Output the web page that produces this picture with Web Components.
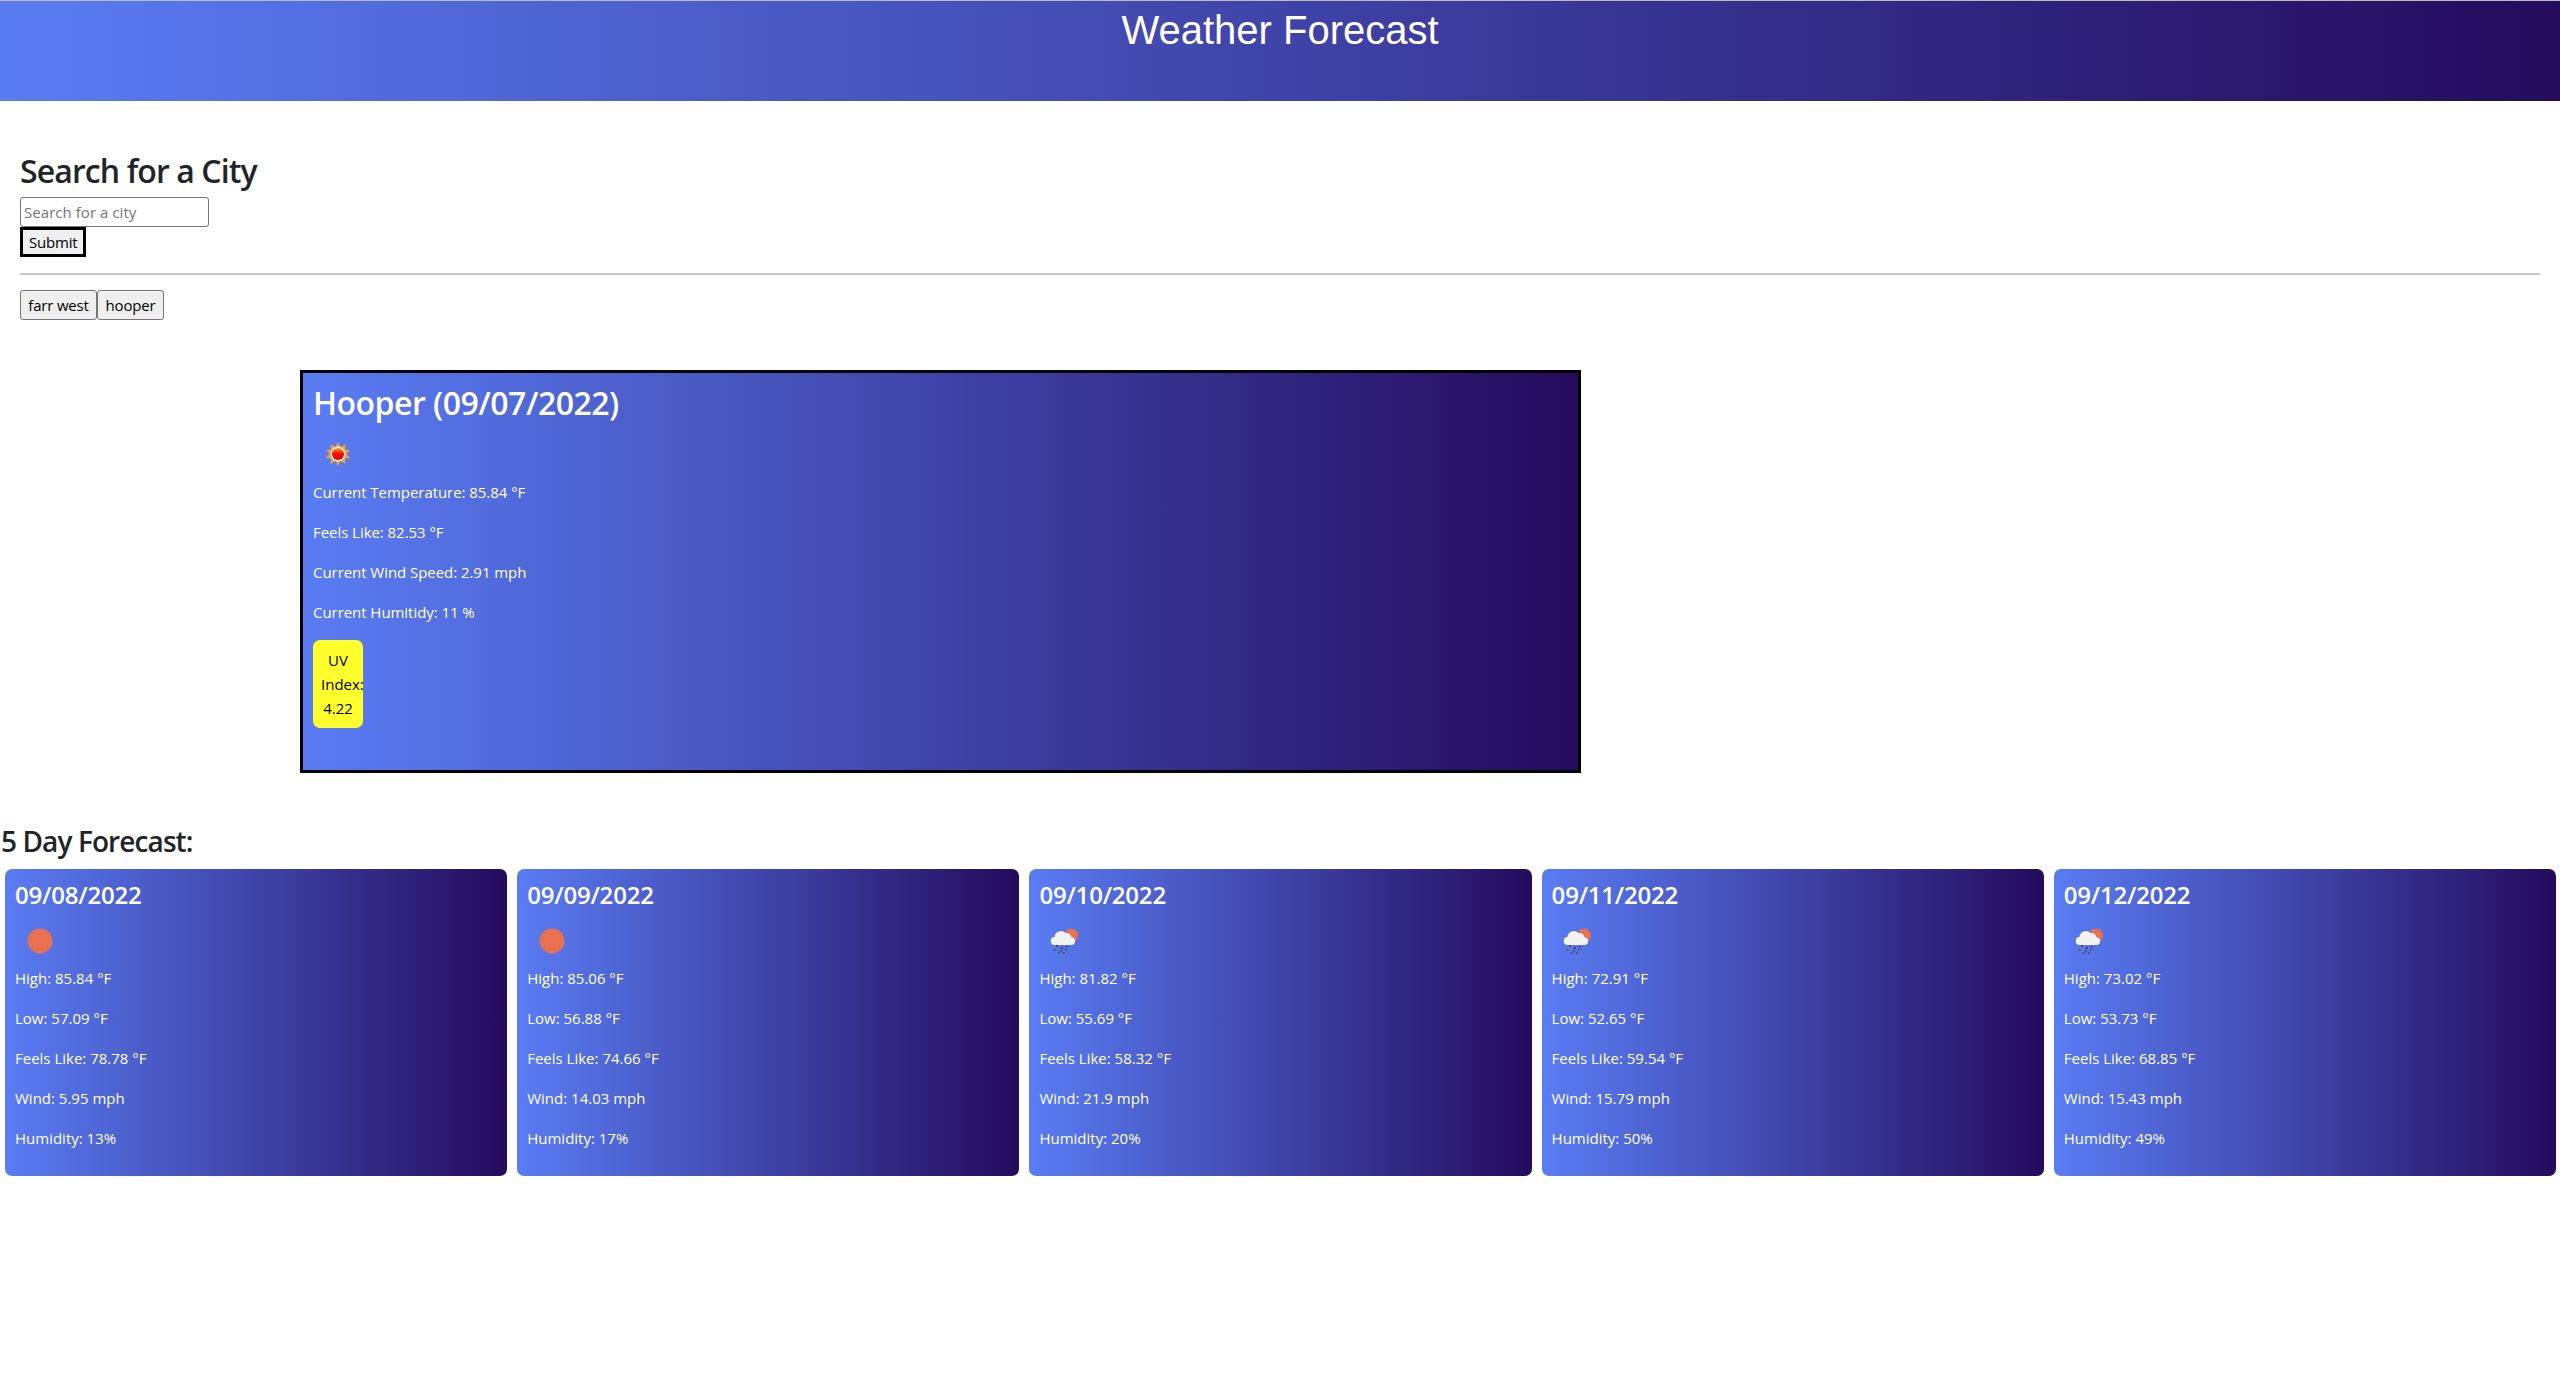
<!DOCTYPE html>
<html lang="en"><head><meta charset="utf-8"><title>Weather Forecast</title>
<style>
html,body{margin:0;padding:0;background:#fff}
body{font:16px/24px "Open Sans","Noto Sans",sans-serif;color:#212529;width:2560px;min-height:1373px}
</style></head><body>
<wf-header>Weather Forecast</wf-header>
<wf-search></wf-search>
<wf-current city="Hooper (09/07/2022)" uv="4.22">
  <p>Current Temperature: 85.84 °F</p><p>Feels Like: 82.53 °F</p><p>Current Wind Speed: 2.91 mph</p><p>Current Humitidy: 11 %</p>
</wf-current>
<wf-forecast>
  <wf-day date="09/08/2022" icon="clear" high="85.84" low="57.09" feels="78.78" wind="5.95" hum="13"></wf-day>
  <wf-day date="09/09/2022" icon="clear" high="85.06" low="56.88" feels="74.66" wind="14.03" hum="17"></wf-day>
  <wf-day date="09/10/2022" icon="rain" high="81.82" low="55.69" feels="58.32" wind="21.9" hum="20"></wf-day>
  <wf-day date="09/11/2022" icon="rain" high="72.91" low="52.65" feels="59.54" wind="15.79" hum="50"></wf-day>
  <wf-day date="09/12/2022" icon="rain" high="73.02" low="53.73" feels="68.85" wind="15.43" hum="49"></wf-day>
</wf-forecast>
<script>
const FONT='"Open Sans","Noto Sans",sans-serif';
const GRAD='linear-gradient(90deg,#5a7cf3,#240b5c)';
function def(name,html){
  customElements.define(name,class extends HTMLElement{
    connectedCallback(){
      if(this.shadowRoot)return;
      const r=this.attachShadow({mode:'open'});
      r.innerHTML=typeof html==='function'?html(this):html;
    }
  });
}
def('wf-header',`<style>
:host{display:block;height:101px;box-sizing:border-box;border-top:1px solid #bbb;background:${GRAD};color:#fff;text-align:center}
h1{margin:0;font:400 40px/58px "Liberation Sans",Arial,sans-serif}
</style><h1><slot></slot></h1>`);
def('wf-search',`<style>
:host{display:block;padding:50px 20px 0;font-family:${FONT}}
h2{margin:0 0 6px;font-size:32px;line-height:40px;font-weight:600;color:#212529;letter-spacing:-.9px}
.f{display:flex;flex-direction:column;align-items:flex-start}
input{box-sizing:border-box;width:189px;height:30px;border:1px solid #767676;border-radius:3px;padding:1px 3px;font:15px/24px ${FONT};letter-spacing:.05px;margin:0;outline:0}
input::placeholder{color:#757575;opacity:1}
button{box-sizing:border-box;height:30px;font:15px/24px ${FONT};letter-spacing:-.2px;background:#efefef;color:#000;padding:0 6px;margin:0;border:1px solid #767676;border-radius:3px}
.sub{border:3px solid #000;border-radius:0;width:66px}
hr{height:2px;border:0;background:#c6c6c6;margin:16px 0 15px}
.h{display:flex}
</style><h2>Search for a City</h2>
<div class="f"><input placeholder="Search for a city"><button class="sub">Submit</button></div>
<hr><div class="h"><button style="width:77px">farr west</button><button style="width:67px">hooper</button></div>`);
def('wf-icon',t=>{
 const k=t.getAttribute('kind');
 const svg={
 sun:`<svg viewBox="0 0 50 50" width="50" height="50"><polygon fill="#f2a23a" points="25,13 27.5,18 32.5,15 32,20.5 37,21 33.5,25 37.5,25 33.5,25 37,29 32,29.5 32.5,35 27.5,32 25,37 22.5,32 17.5,35 18,29.5 13,29 16.5,25 13,21 18,20.5 17.5,15 22.5,18"/><circle cx="25" cy="25" r="7.4" fill="#fff6e6"/><circle cx="25" cy="25" r="6" fill="url(#g)"/><defs><linearGradient id="g" x1="0" y1="0" x2="0" y2="1"><stop offset="0" stop-color="#f2a11d"/><stop offset=".5" stop-color="#f00"/><stop offset="1" stop-color="#e60000"/></linearGradient></defs></svg>`,
 clear:`<svg viewBox="0 0 50 50" width="50" height="50"><circle cx="25" cy="25" r="12.5" fill="#e9714f"/></svg>`,
 rain:`<svg viewBox="0 0 50 50" width="50" height="50"><circle cx="32" cy="19.500" r="7" fill="#e9714f"/><path fill="#f3f3f3" d="M16 29a4 4 0 0 1-.5-8a6.500 6.500 0 0 1 11-4a5.500 5.500 0 0 1 6 4.300a3.900 3.900 0 0 1 .5 7.700z"/><g fill="#444"><rect x="17" y="29" width="2" height="2"/><rect x="22" y="31" width="2" height="2"/><rect x="27" y="30" width="2" height="1.500"/><rect x="15" y="33" width="1.500" height="1.500"/><rect x="21" y="34" width="2" height="1.500"/><rect x="26" y="33" width="1.500" height="1.500"/><rect x="19" y="36" width="1.500" height="1.500"/><rect x="24" y="36" width="1.500" height="1.500"/></g></svg>`}[k];
 return `<style>:host{display:block;width:50px;height:50px}svg{display:block}</style>${svg}`;
});
def('wf-current',t=>`<style>
:host{display:block;box-sizing:border-box;width:1281px;height:403px;margin:50px 0 0 300px;border:3px solid #000;padding:10px;background:${GRAD};color:#fff;font-family:${FONT}}
h2{margin:0 0 8px;font-size:32px;line-height:40px;font-weight:600;letter-spacing:-.5px}
wf-icon{margin:-2px 0 1px}
::slotted(p){margin:0 0 16px;font-size:15px;letter-spacing:-.05px}
.uv{box-sizing:border-box;width:50px;height:88px;padding:8px;background:#ffff2b;color:#000;border-radius:7px;text-align:center;font-size:15px;letter-spacing:0;white-space:nowrap}
</style><h2>${t.getAttribute('city')}</h2><wf-icon kind="sun"></wf-icon><slot></slot>
<div class="uv">UV<br>Index:<br>${t.getAttribute('uv')}</div>`);
def('wf-forecast',`<style>
:host{display:block;margin-top:50px;font-family:${FONT}}
h4{margin:0 0 10px 1px;font-size:28px;line-height:36px;font-weight:600;letter-spacing:-.9px;color:#212529}
.r{display:flex;gap:10px;padding:0 4px 0 5px}
::slotted(wf-day){flex:1 1 0}
</style><h4>5 Day Forecast:</h4><div class="r"><slot></slot></div>`);
def('wf-day',t=>{const a=n=>t.getAttribute(n);return `<style>
:host{display:block;box-sizing:border-box;height:307px;padding:10px;border-radius:7px;background:${GRAD};color:#fff;font-family:${FONT}}
h4{margin:0 0 5px;font-size:24px;line-height:32px;font-weight:600;letter-spacing:-.2px}
p{margin:0 0 16px;font-size:15px;line-height:24px;letter-spacing:0}
</style><h4>${a('date')}</h4><wf-icon kind="${a('icon')}"></wf-icon>
<p>High: ${a('high')} °F</p><p>Low: ${a('low')} °F</p><p>Feels Like: ${a('feels')} °F</p><p>Wind: ${a('wind')} mph</p><p>Humidity: ${a('hum')}%</p>`});
</script>
</body></html>
